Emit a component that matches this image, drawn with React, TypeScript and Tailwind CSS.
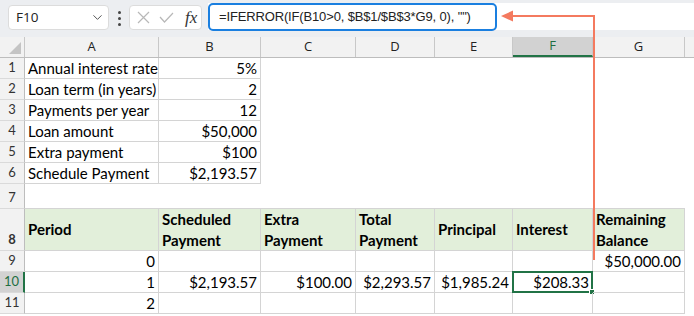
import { ChevronDown } from 'lucide-react';

const cols = [
  { key: 'A', w: 'w-[134px]' },
  { key: 'B', w: 'w-[102px]' },
  { key: 'C', w: 'w-[95px]' },
  { key: 'D', w: 'w-[79px]' },
  { key: 'E', w: 'w-[78px]' },
  { key: 'F', w: 'w-[80px]' },
  { key: 'G', w: 'w-[92px]' },
];

const inputs = [
  ['Annual interest rate', '5%'],
  ['Loan term (in years)', '2'],
  ['Payments per year', '12'],
  ['Loan amount', '$50,000'],
  ['Extra payment', '$100'],
  ['Schedule Payment', '$2,193.57'],
];

const headers = [
  ['Period'],
  ['Scheduled', 'Payment'],
  ['Extra', 'Payment'],
  ['Total', 'Payment'],
  ['Principal'],
  ['Interest'],
  ['Remaining', 'Balance'],
];

const body = [
  ['0', '', '', '', '', '', '$50,000.00'],
  ['1', '$2,193.57', '$100.00', '$2,293.57', '$1,985.24', '$208.33', ''],
  ['2', '', '', '', '', '', ''],
];

const RowNum = ({ n, h, active = false, bottom = false }: { n: number; h: string; active?: boolean; bottom?: boolean }) => (
  <div
    className={`w-[25px] shrink-0 ${h} flex justify-center border-b border-[#dadada] text-[13px] ${
      bottom ? 'items-end pb-[1px]' : 'items-center'
    } ${active ? 'bg-[#d2d2d2] text-[#1e6e42] border-r-2 border-r-[#217346]' : 'bg-[#f2f2f2] text-[#333] border-r border-r-[#bdbdbd]'}`}
  >
    {n}
  </div>
);

export default function App() {
  return (
    <div className="relative w-[694px] h-[316px] overflow-hidden bg-white font-['Lato',sans-serif]">
      {/* formula bar */}
      <div className="h-[37px] bg-[#eceef1] flex items-start font-['Open_Sans',sans-serif]">
        <div className="mt-[5px] ml-[8px] w-[101px] h-[25px] bg-white rounded-[4px] border border-[#dcdcdc] flex items-center justify-between pl-[7px] pr-[3px]">
          <span className="text-[13.5px] text-[#222]">F10</span>
          <ChevronDown size={15} strokeWidth={1.6} className="text-[#555]" />
        </div>
        <div className="mt-[11px] ml-[9px] w-[3px] flex flex-col gap-[3px]">
          <span className="w-[3px] h-[3px] rounded-full bg-[#444]" />
          <span className="w-[3px] h-[3px] rounded-full bg-[#444]" />
          <span className="w-[3px] h-[3px] rounded-full bg-[#444]" />
        </div>
        <div className="mt-[5px] ml-[8px] w-[73px] h-[25px] bg-white rounded-[4px] border border-[#dcdcdc] flex items-center pl-[7px] gap-[9px]">
          <svg width="13" height="13" viewBox="0 0 13 13" fill="none" stroke="#b8b8b8" strokeWidth="1.2">
            <path d="M1 1L12 12M12 1L1 12" />
          </svg>
          <svg width="15" height="11" viewBox="0 0 15 11" fill="none" stroke="#b8b8b8" strokeWidth="1.2">
            <path d="M1 5L5.5 10L14 1" />
          </svg>
          <span className="font-['Liberation_Serif',serif] italic text-[17px] leading-none text-[#333] ml-[2px]">fx</span>
        </div>
        <div className="mt-[3px] ml-[6px] flex-1 h-[27px] bg-white flex">
          <div className="w-[289px] h-[28px] border-2 border-[#1a7fe0] rounded-[5px] flex items-center pl-[9px] text-[13px] text-[#222] font-['Liberation_Sans',sans-serif] tracking-[-0.15px]">
            =IFERROR(IF(B10&gt;0, $B$1/$B$3*G9, 0), "")
          </div>
        </div>
      </div>

      {/* column headers */}
      <div className="flex h-[21px] bg-[#f2f2f2] border-b border-[#bdbdbd] font-['Open_Sans',sans-serif] text-[13px] text-[#222]">
        <div className="w-[25px] shrink-0 border-r border-[#c8c8c8] relative">
          <svg className="absolute right-[3px] bottom-[3px]" width="12" height="12" viewBox="0 0 12 12">
            <path d="M12 0L12 12L0 12Z" fill="#c4c4c4" />
          </svg>
        </div>
        {cols.map((c) => (
          <div
            key={c.key}
            className={`${c.w} shrink-0 flex items-center justify-center border-r border-[#c8c8c8] ${
              c.key === 'F' ? 'bg-[#d2d2d2] text-[#1e6e42] border-b-2 border-b-[#217346]' : ''
            }`}
          >
            {c.key}
          </div>
        ))}
        <div className="flex-1" />
      </div>

      {/* inputs */}
      {inputs.map(([label, value], i) => (
        <div key={label} className="flex h-[21px] text-[15px] text-black">
          <RowNum n={i + 1} h="h-[21px]" />
          <div className="w-[134px] shrink-0 border-r border-b border-[#d4d4d4] flex items-center pl-[3px] whitespace-nowrap">{label}</div>
          <div className="w-[102px] shrink-0 border-r border-b border-[#d4d4d4] flex items-center justify-end pr-[3px]">{value}</div>
        </div>
      ))}

      {/* row 7 */}
      <div className="flex h-[25px]">
        <RowNum n={7} h="h-[25px]" bottom />
        <div className="w-[660px] shrink-0 border-b border-[#d4d4d4]" />
      </div>

      {/* row 8 header */}
      <div className="flex h-[42px] text-[15px] font-bold text-black">
        <RowNum n={8} h="h-[42px]" bottom />
        {cols.map((c, i) => (
          <div key={c.key} className={`${c.w} shrink-0 bg-[#e2efda] border-r border-b border-[#d4d4d4] flex flex-col justify-center pl-[3px] leading-[21px]`}>
            {headers[i].map((t) => (
              <span key={t}>{t}</span>
            ))}
          </div>
        ))}
      </div>

      {/* body rows */}
      {body.map((r, ri) => (
        <div key={ri} className="flex h-[21px] text-[15px] text-black">
          <RowNum n={9 + ri} h="h-[21px]" active={ri === 1} />
          {cols.map((c, ci) => (
            <div
              key={c.key}
              className={`${c.w} shrink-0 border-r border-b border-[#d4d4d4] flex items-center justify-end pr-[3px] relative`}
            >
              {r[ci]}
              {ri === 1 && c.key === 'F' && (
                <div className="absolute left-[-1px] top-[-1px] right-[-1px] bottom-[-1px] border-2 border-[#217346]">
                  <span className="absolute right-[-4px] bottom-[-4px] w-[6px] h-[6px] bg-[#217346] border border-white" />
                </div>
              )}
            </div>
          ))}
        </div>
      ))}

      {/* arrow */}
      <svg className="absolute left-0 top-0 pointer-events-none" width="694" height="316">
        <path d="M594 260V16H510" fill="none" stroke="#f47a5f" strokeWidth="2" />
        <path d="M501 16L513 10.5V21.5Z" fill="#f47a5f" />
      </svg>
    </div>
  );
}
